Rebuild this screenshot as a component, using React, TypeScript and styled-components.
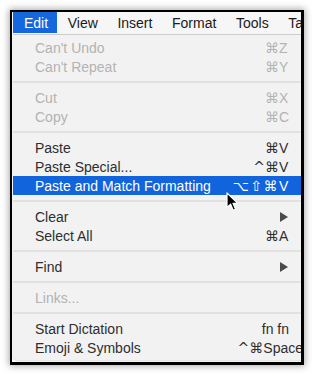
import React, { FC } from "react";
import styled, { createGlobalStyle } from "styled-components";

const GlobalStyle = createGlobalStyle`
  html, body {
    margin: 0;
    padding: 0;
    background: #ffffff;
  }
  body {
    font-family: "Liberation Sans", Arial, "DejaVu Sans", sans-serif;
    -webkit-font-smoothing: antialiased;
  }
`;

const Page = styled.div`
  width: 314px;
  height: 374px;
  padding: 10px 0 0 10px;
  box-sizing: border-box;
`;

const Frame = styled.div`
  position: relative;
  width: 294px;
  height: 355px;
  box-sizing: border-box;
  border-style: solid;
  border-color: #000;
  border-width: 2px 3px 3px 2px;
  padding-left: 1px;
  background: #fbfbfb;
  overflow: hidden;
  box-shadow: 0 0 7px 1px rgba(0, 0, 0, 0.35);
`;

const MenuBar = styled.div`
  display: flex;
  height: 22px;
  background: #f6f6f6;
  border-bottom: 1px solid #cdcdcd;
  white-space: nowrap;
`;

const BarItem = styled.div<{ $open?: boolean }>`
  display: flex;
  align-items: center;
  height: 21px;
  padding: 0 9px 0 11px;
  font-size: 14px;
  color: ${(p) => (p.$open ? "#fff" : "#1a1a1a")};
  background: ${(p) => (p.$open ? "#1467dd" : "transparent")};

  & + & {
    padding-left: 10.6px;
  }
`;

const Menu = styled.div`
  width: 300px;
  padding: 3px 0;
  background: #f2f2f2;
  border-radius: 0 0 5px 5px;
  box-shadow: 0 1px 2px rgba(0, 0, 0, 0.12);
`;

const Row = styled.div<{ $disabled?: boolean; $active?: boolean }>`
  display: flex;
  align-items: center;
  justify-content: space-between;
  height: 19px;
  padding: 0 24px 0 22px;
  font-size: 14px;
  white-space: nowrap;
  color: ${(p) => (p.$active ? "#fff" : p.$disabled ? "#b3b3b3" : "#2e2e2e")};
  background: ${(p) => (p.$active ? "#1264dc" : "transparent")};
`;

const Separator = styled.div`
  height: 12px;
  display: flex;
  align-items: center;

  &::after {
    content: "";
    flex: 1;
    height: 2px;
    background: #e1e1e1;
  }
`;

const Shortcut = styled.span<{ $overflow?: number }>`
  display: flex;
  align-items: center;
  margin-right: ${(p) => (p.$overflow ? -p.$overflow : 0)}px;
  font-family: "Liberation Sans", "DejaVu Sans", sans-serif;
`;

const Mods = styled.span<{ $spaced?: boolean }>`
  font-family: "DejaVu Sans", sans-serif;
  font-size: 14px;
  letter-spacing: ${(p) => (p.$spaced ? "1.5px" : "0")};
`;

const Key = styled.span`
  min-width: 10px;
  text-align: left;
`;

const Arrow = styled.span`
  width: 0;
  height: 0;
  margin-right: 1px;
  border-top: 5px solid transparent;
  border-bottom: 5px solid transparent;
  border-left: 8px solid #4a4a4a;
`;

const Cursor = styled.svg`
  position: absolute;
  left: 214px;
  top: 180px;
`;

type Item =
  | { sep: true }
  | {
      sep?: false;
      label: string;
      mods?: string;
      key?: string;
      disabled?: boolean;
      active?: boolean;
      submenu?: boolean;
      overflow?: number;
    };

const items: Item[] = [
  { label: "Can't Undo", mods: "⌘", key: "Z", disabled: true },
  { label: "Can't Repeat", mods: "⌘", key: "Y", disabled: true },
  { sep: true },
  { label: "Cut", mods: "⌘", key: "X", disabled: true },
  { label: "Copy", mods: "⌘", key: "C", disabled: true },
  { sep: true },
  { label: "Paste", mods: "⌘", key: "V" },
  { label: "Paste Special...", mods: "^⌘", key: "V" },
  { label: "Paste and Match Formatting", mods: "⌥⇧⌘", key: "V", active: true },
  { sep: true },
  { label: "Clear", submenu: true },
  { label: "Select All", mods: "⌘", key: "A" },
  { sep: true },
  { label: "Find", submenu: true },
  { sep: true },
  { label: "Links...", disabled: true },
  { sep: true },
  { label: "Start Dictation", key: "fn fn" },
  { label: "Emoji & Symbols", mods: "^⌘", key: "Space", overflow: 14 },
];

const bar = ["Edit", "View", "Insert", "Format", "Tools", "Table"];

const MenuRow: FC<{ item: Exclude<Item, { sep: true }> }> = ({ item }) => (
  <Row $disabled={item.disabled} $active={item.active}>
    <span>{item.label}</span>
    {item.submenu ? (
      <Arrow />
    ) : (
      <Shortcut $overflow={item.overflow}>
        {item.mods && <Mods $spaced={item.active}>{item.mods}</Mods>}
        {item.key && <Key>{item.key}</Key>}
      </Shortcut>
    )}
  </Row>
);

export default function App() {
  return (
    <Page>
      <GlobalStyle />
      <Frame>
        <MenuBar>
          {bar.map((name, i) => (
            <BarItem key={name} $open={i === 0}>
              {name}
            </BarItem>
          ))}
        </MenuBar>
        <Menu>
          {items.map((item, i) =>
            item.sep ? <Separator key={i} /> : <MenuRow key={i} item={item} />
          )}
        </Menu>
        <Cursor width="14" height="20" viewBox="0 0 14 20">
          <path
            d="M1 1 L1 15.5 L4.6 12.2 L7.2 18.2 L9.6 17.2 L7 11.3 L11.8 11.3 Z"
            fill="#000"
            stroke="#fff"
            strokeWidth="1.2"
            strokeLinejoin="round"
          />
        </Cursor>
      </Frame>
    </Page>
  );
}
